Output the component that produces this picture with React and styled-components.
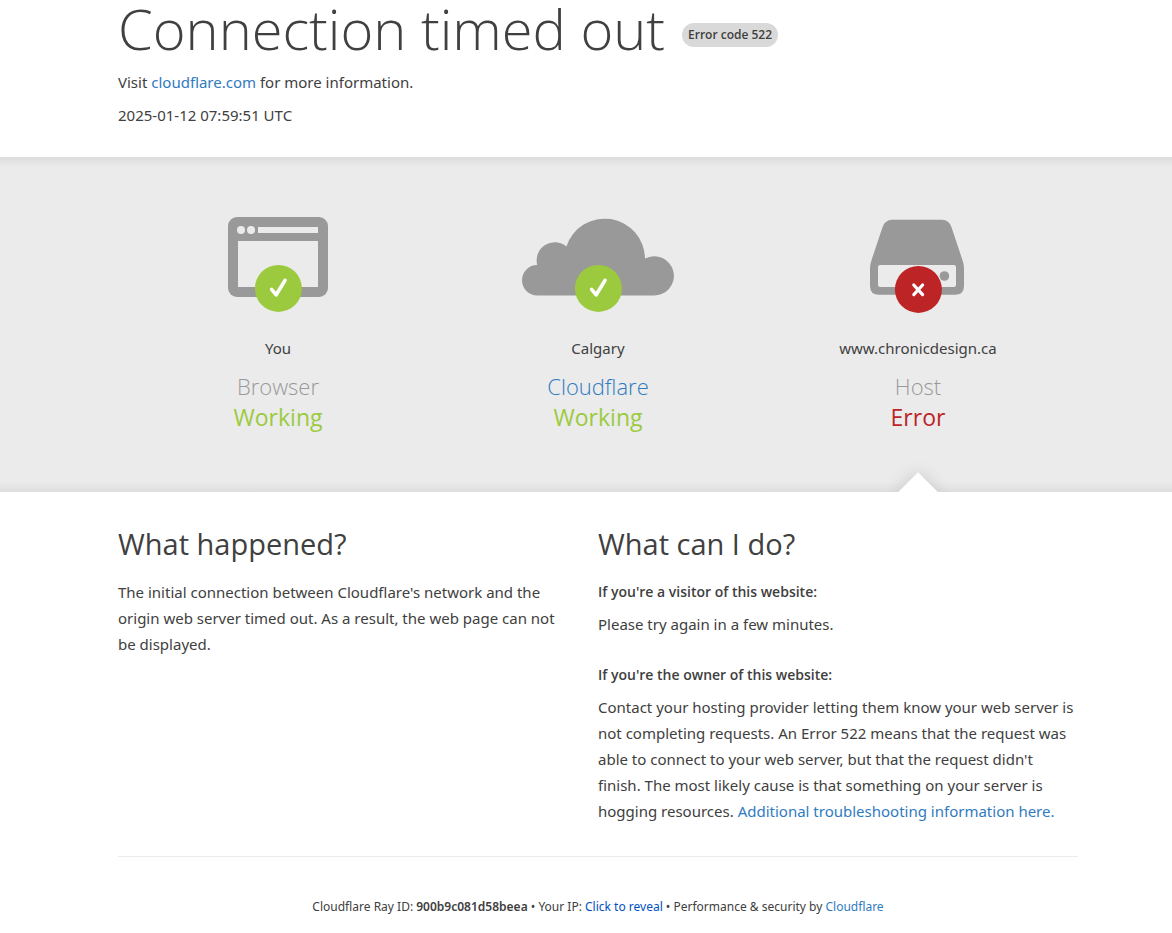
import React from "react";
import styled, { createGlobalStyle } from "styled-components";

const GlobalStyle = createGlobalStyle`
  body {
    margin: 0;
    background: #fff;
    color: #404040;
    font-family: "Noto Sans", "Open Sans", sans-serif;
    font-size: 15px;
    line-height: 26px;
  }

  h1, h2, h3, p {
    margin: 0;
  }
`;

const Container = styled.div`
  box-sizing: border-box;
  width: 100%;
  max-width: 984px;
  margin: 0 auto;
  padding-left: 24px;
`;

const Link = styled.a`
  color: #2f7bbf;
  text-decoration: none;

  &:hover {
    color: #f68b1f;
  }
`;

const Header = styled.header`
  padding-bottom: 22px;

  p {
    margin-bottom: 7px;
  }
`;

const TitleRow = styled.div`
  display: flex;
  flex-wrap: wrap;
  align-items: center;
  gap: 17px;
  margin-bottom: 13px;
`;

const Title = styled.h1`
  font-family: "Open Sans", sans-serif;
  font-size: 56px;
  font-weight: 300;
  line-height: 56px;
`;

const CodeBadge = styled.span`
  margin-top: 14px;
  padding: 0 6px;
  border-radius: 12px;
  background: #d9d9d9;
  font-family: "Open Sans", sans-serif;
  font-size: 12px;
  font-weight: 600;
  line-height: 24px;
`;

const StatusBand = styled.section`
  overflow: hidden;
  background: linear-gradient(
    #dcdcdc,
    #ebebeb 10px,
    #ebebeb calc(100% - 10px),
    #dedede
  );
`;

const StatusGrid = styled.div`
  display: grid;
  grid-template-columns: repeat(3, 1fr);
`;

const StatusItem = styled.div`
  position: relative;
  display: flex;
  flex-direction: column;
  align-items: center;
  padding: 56px 0 60px;
  text-align: center;
`;

const StatusIcon = styled.svg`
  display: block;
  width: 160px;
  height: 104px;
  margin-bottom: 18px;
`;

const StatusName = styled.h3`
  margin-top: 9px;
  color: #999;
  font-family: "Open Sans", sans-serif;
  font-size: 22px;
  font-weight: 300;
  line-height: 32px;
`;

const StatusText = styled.span`
  color: ${({ $error }) => ($error ? "#bd2426" : "#9bca3e")};
  font-family: "Open Sans", sans-serif;
  font-size: 23px;
  line-height: 30px;
`;

const Caret = styled.span`
  position: absolute;
  bottom: -14px;
  left: calc(50% - 14px);
  width: 28px;
  height: 28px;
  background: #fff;
  box-shadow: 0 0 18px rgba(0, 0, 0, 0.15);
  transform: rotate(45deg);
`;

const Columns = styled.main`
  display: grid;
  grid-template-columns: 1fr 1fr;
  padding: 35px 0 32px;
`;

const Column = styled.section`
  padding-right: ${({ $gutter }) => ($gutter ? "40px" : "0")};
`;

const Heading = styled.h2`
  margin-bottom: 18px;
  font-family: "Open Sans", sans-serif;
  font-size: 29px;
  font-weight: 400;
  line-height: 34px;
`;

const Subheading = styled.h3`
  margin-bottom: 7px;
  font-family: "Open Sans", sans-serif;
  font-size: 14px;
  font-weight: 600;
  line-height: 25px;

  p + & {
    margin-top: 25px;
  }
`;

const Footer = styled.footer`
  padding: 37px 0 14px;
  border-top: 1px solid #ebebeb;
  font-size: 12px;
  text-align: center;
`;

const RayId = styled.strong`
  font-weight: 600;
`;

const RevealButton = styled.button`
  padding: 0;
  border: 0;
  background: none;
  color: #0051c3;
  font: inherit;
  cursor: pointer;
`;

function OkMark() {
  return (
    <g>
      <circle cx="80.4" cy="75.4" r="23.5" fill="#9bca3e" />
      <path
        d="M73.6 76.4l4.6 5.4 8.8-14.4"
        fill="none"
        stroke="#fff"
        strokeWidth="3.6"
        strokeLinecap="round"
        strokeLinejoin="round"
      />
    </g>
  );
}

function ErrorMark() {
  return (
    <g>
      <circle cx="80.4" cy="76.4" r="23.5" fill="#bd2426" />
      <path
        d="M75.8 72l8.8 9.6M84.6 72l-8.8 9.6"
        fill="none"
        stroke="#fff"
        strokeWidth="3.2"
        strokeLinecap="round"
      />
    </g>
  );
}

function BrowserIcon() {
  return (
    <StatusIcon viewBox="0 0 160 104" aria-hidden="true">
      <rect x="30" y="4" width="100" height="80" rx="9" fill="#999" />
      <rect x="40" y="28" width="80" height="46" fill="#ebebeb" />
      <rect x="60" y="14" width="60" height="6" fill="#ebebeb" />
      <circle cx="43" cy="17" r="4" fill="#ebebeb" />
      <circle cx="53" cy="17" r="4" fill="#ebebeb" />
      <OkMark />
    </StatusIcon>
  );
}

function CloudIcon() {
  return (
    <StatusIcon viewBox="0 0 160 104" aria-hidden="true">
      <path
        d="M19.2 82.4a15.2 15.2 0 0 1 0-30.4A18.2 18.2 0 0 1 48.4 33.4A40.3 40.3 0 0 1 127 45.6A19.6 19.6 0 1 1 134.6 82.4z"
        fill="#999"
      />
      <OkMark />
    </StatusIcon>
  );
}

function ServerIcon() {
  return (
    <StatusIcon viewBox="0 0 160 104" aria-hidden="true">
      <path
        d="M54 6.7h50q7 0 9.5 7.5l11 33q1.5 4 1.5 8v17.5q0 9-9 9H41q-9 0-9-9V55.2q0-4 1.5-8l11-33q2.5-7.5 9.5-7.5z"
        fill="#999"
      />
      <rect x="40" y="52" width="78" height="22" rx="2" fill="#ebebeb" />
      <circle cx="106.4" cy="63" r="4.8" fill="#999" />
      <ErrorMark />
    </StatusIcon>
  );
}

export default function App() {
  return (
    <>
      <GlobalStyle />
      <Header>
        <Container>
          <TitleRow>
            <Title>Connection timed out</Title>
            <CodeBadge>Error code 522</CodeBadge>
          </TitleRow>
          <p>
            Visit <Link href="#cloudflare">cloudflare.com</Link> for more
            information.
          </p>
          <p>2025-01-12 07:59:51 UTC</p>
        </Container>
      </Header>

      <StatusBand>
        <Container>
          <StatusGrid>
            <StatusItem>
              <BrowserIcon />
              <span>You</span>
              <StatusName>Browser</StatusName>
              <StatusText>Working</StatusText>
            </StatusItem>
            <StatusItem>
              <CloudIcon />
              <span>Calgary</span>
              <StatusName>
                <Link href="#cloudflare">Cloudflare</Link>
              </StatusName>
              <StatusText>Working</StatusText>
            </StatusItem>
            <StatusItem>
              <ServerIcon />
              <span>www.chronicdesign.ca</span>
              <StatusName>Host</StatusName>
              <StatusText $error>Error</StatusText>
              <Caret />
            </StatusItem>
          </StatusGrid>
        </Container>
      </StatusBand>

      <Container>
        <Columns>
          <Column $gutter>
            <Heading>What happened?</Heading>
            <p>
              The initial connection between Cloudflare's network and the
              origin web server timed out. As a result, the web page can not be
              displayed.
            </p>
          </Column>
          <Column>
            <Heading>What can I do?</Heading>
            <Subheading>If you're a visitor of this website:</Subheading>
            <p>Please try again in a few minutes.</p>
            <Subheading>If you're the owner of this website:</Subheading>
            <p>
              Contact your hosting provider letting them know your web server
              is not completing requests. An Error 522 means that the request
              was able to connect to your web server, but that the request
              didn't finish. The most likely cause is that something on your
              server is hogging resources.{" "}
              <Link href="#troubleshooting">
                Additional troubleshooting information here.
              </Link>
            </p>
          </Column>
        </Columns>
        <Footer>
          Cloudflare Ray ID: <RayId>900b9c081d58beea</RayId> • Your IP:{" "}
          <RevealButton type="button">Click to reveal</RevealButton> •
          Performance &amp; security by <Link href="#cloudflare">Cloudflare</Link>
        </Footer>
      </Container>
    </>
  );
}
